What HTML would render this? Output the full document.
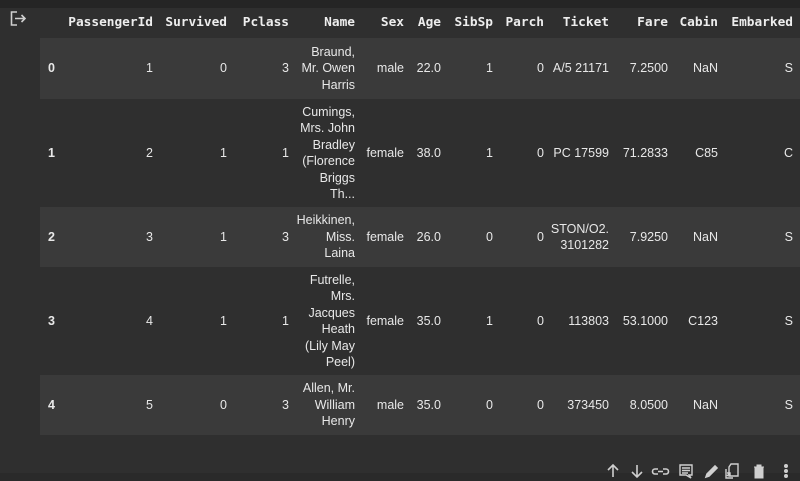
<!DOCTYPE html>
<html><head><meta charset="utf-8"><style>
html,body{margin:0;padding:0;width:800px;height:481px;overflow:hidden;background:#2f2f2f;font-family:"Liberation Sans","DejaVu Sans",sans-serif;color:#e8e8e8}
.top{position:absolute;left:0;top:0;width:800px;height:8px;background:#252525}
.bot{position:absolute;left:0;top:473px;width:800px;height:8px;background:#2a2a2a}
table{position:absolute;left:40px;top:8px;border-collapse:collapse;table-layout:fixed;width:760px;font-size:12.5px}
td,th{padding:0;text-align:right;vertical-align:middle;line-height:16.5px;white-space:nowrap}
th{font-family:"DejaVu Sans Mono","Liberation Mono",monospace;font-weight:bold;font-size:12.8px;height:30px;color:#eee}
tr.s td{background:#3a3a3a}
td.i{text-align:left;padding-left:8px;font-weight:bold}
.icon{position:absolute;fill:none;stroke:#cfcfcf;stroke-width:1.6}
</style></head><body>
<div class="top"></div>
<div class="bot"></div>
<svg class="icon" style="left:9px;top:10px" width="18" height="18" viewBox="0 0 18 18"><path d="M8 2H2.5v13H8M6 8.5h10M12.5 5l3.5 3.5-3.5 3.5"/></svg>
<table>
<colgroup><col style="width:22px"><col style="width:91px"><col style="width:74px"><col style="width:62px"><col style="width:66px"><col style="width:49px"><col style="width:37px"><col style="width:52px"><col style="width:51px"><col style="width:65px"><col style="width:59px"><col style="width:50px"><col style="width:75px"><col style="width:7px"></colgroup>
<tr><th></th><th>PassengerId</th><th>Survived</th><th>Pclass</th><th>Name</th><th>Sex</th><th>Age</th><th>SibSp</th><th>Parch</th><th>Ticket</th><th>Fare</th><th>Cabin</th><th>Embarked</th><th></th></tr>
<tr class="s" style="height:61px"><td class="i">0</td><td>1</td><td>0</td><td>3</td><td>Braund,<br>Mr. Owen<br>Harris</td><td>male</td><td>22.0</td><td>1</td><td>0</td><td>A/5 21171</td><td>7.2500</td><td>NaN</td><td>S</td><td></td></tr>
<tr style="height:108px"><td class="i">1</td><td>2</td><td>1</td><td>1</td><td>Cumings,<br>Mrs. John<br>Bradley<br>(Florence<br>Briggs<br>Th...</td><td>female</td><td>38.0</td><td>1</td><td>0</td><td>PC 17599</td><td>71.2833</td><td>C85</td><td>C</td><td></td></tr>
<tr class="s" style="height:60px"><td class="i">2</td><td>3</td><td>1</td><td>3</td><td>Heikkinen,<br>Miss.<br>Laina</td><td>female</td><td>26.0</td><td>0</td><td>0</td><td>STON/O2.<br>3101282</td><td>7.9250</td><td>NaN</td><td>S</td><td></td></tr>
<tr style="height:108px"><td class="i">3</td><td>4</td><td>1</td><td>1</td><td>Futrelle,<br>Mrs.<br>Jacques<br>Heath<br>(Lily May<br>Peel)</td><td>female</td><td>35.0</td><td>1</td><td>0</td><td>113803</td><td>53.1000</td><td>C123</td><td>S</td><td></td></tr>
<tr class="s" style="height:60px"><td class="i">4</td><td>5</td><td>0</td><td>3</td><td>Allen, Mr.<br>William<br>Henry</td><td>male</td><td>35.0</td><td>0</td><td>0</td><td>373450</td><td>8.0500</td><td>NaN</td><td>S</td><td></td></tr>
</table>
<svg class="icon" style="left:604px;top:462px" width="190" height="18" viewBox="0 0 190 18">
<path d="M9 15V3M4 8l5-5 5 5"/>
<path d="M33 3v12M28 10l5 5 5-5"/>
<path d="M54 7h-3a2.5 2.5 0 000 5h3M59 7h3a2.5 2.5 0 010 5h-3M54 9.5h5"/>
<path d="M76 3h12v10h-3l2 3-5-3h-6zM78 6h8M78 8.5h8M78 11h6" stroke-width="1.4"/>
<path d="M102 15l1-3 8-8 2 2-8 8z" fill="#cfcfcf"/>
<path d="M127 2h7v12h-9V5zM122 7v9h7M123 14l3-3M123 11h3v3" stroke-width="1.4"/>
<path d="M150 5h10M153 5V3h4v2M151 6h8v10h-8z" fill="#cfcfcf" stroke-width="1"/>
<circle cx="182" cy="4" r="1.2" fill="#cfcfcf"/><circle cx="182" cy="9" r="1.2" fill="#cfcfcf"/><circle cx="182" cy="14" r="1.2" fill="#cfcfcf"/>
</svg>
</body></html>
